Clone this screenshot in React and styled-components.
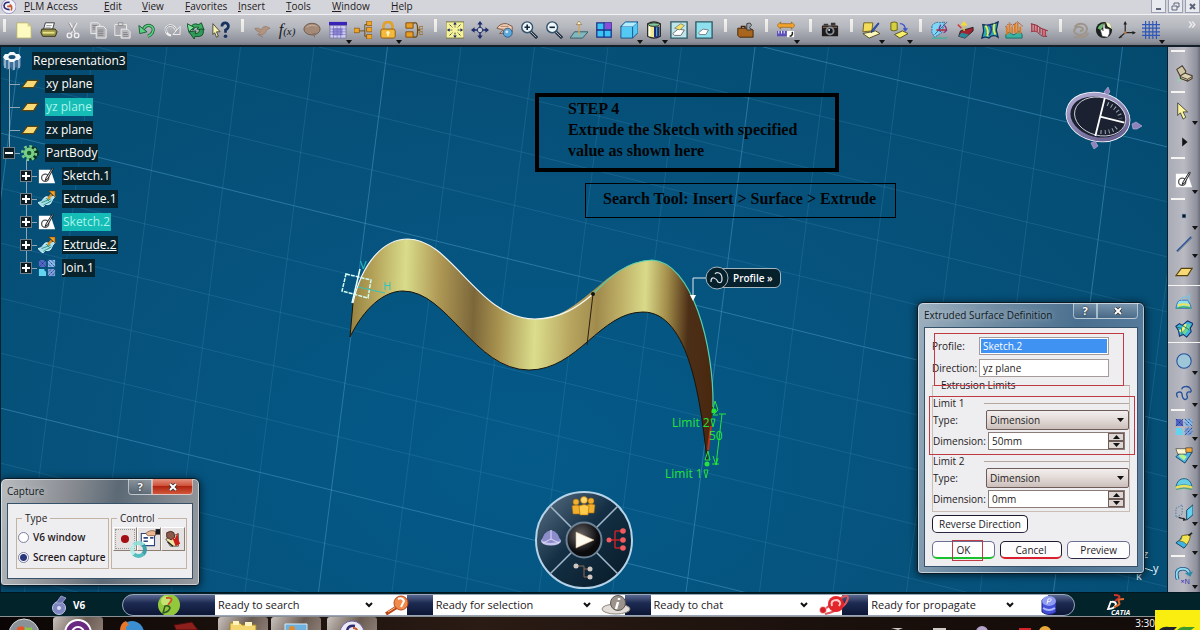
import React, { useState } from 'react';
import styled, { createGlobalStyle, css } from 'styled-components';

const GlobalStyle = createGlobalStyle`
    * {
        box-sizing: border-box;
    }
    body {
        margin: 0;
        background: #06527c;
        font-family: "Open Sans", "Noto Sans", sans-serif;
        font-size: 11px;
        overflow: hidden;
    }
    button, input, select {
        font: inherit;
        color: inherit;
        margin: 0;
        padding: 0;
    }
`

/* ---------- icons, all on a 20 x 20 grid ---------- */

const axisTip = <path d="M10 1l2 3H8zM10 19l2-3H8zM1 10l3-2v4zM19 10l-3-2v4z" fill="#1d2b6b" />

const patch = (
    <>
        <path d="M1 7l4-3 3 2 6-5 6 3-3 5 1 4-5 6-4-3-4 2-1-6z" fill="#3fb4e0" stroke="#14306c" strokeWidth="1.2" />
        <path d="M4 12Q9 9 10 5L13 4Q12 11 7 14z" fill="#f4f07a" />
        <path d="M8 14Q13 11 14 5L17 5Q15 12 11 16z" fill="#6fd885" />
        <path d="M2 8l5 1 1 8M8 6l8 5" stroke="#1c7c4a" fill="none" />
    </>
)

const sketchIcon = (
    <>
        <path d="M1 3h13l5 15H1z" fill="#fff" />
        <circle cx="8" cy="12" r="4" fill="none" stroke="#555" strokeWidth="1.4" />
        <path d="M16 1L9 12l-1 3 3-2 6-11z" fill="#ddd" stroke="#111" />
    </>
)

const extrudeIcon = (
    <>
        <path d="M0 14Q4 14 6 10Q8 6 12 8L19 7Q16 10 14 15Q12 17 8 16Q6 20 4 18z" fill="#9fe0ea" stroke="#e8f8ff" />
        <path d="M4 14l10-4M6 17l9-5M9 9l4 4" stroke="#2d8b7c" />
        <path d="M11 10l4-5" stroke="#e08a18" strokeWidth="2.400" />
        <path d="M12 1h7v7z" fill="#f6a021" stroke="#613600" strokeWidth=".6" />
    </>
)

const joinIcon = (
    <>
        <path d="M1 1h5l3 2v6H1z" fill="#5368c4" />
        <path d="M11 1h8v8h-8z" fill="#86b8e8" />
        <path d="M1 11h6q0 3 2 3v5H1z" fill="#63d3ef" />
        <path d="M11 11h8v8h-8z" fill="#7da0d8" />
        <path d="M1 1l8 8M9 1L1 9M11 1l8 8M15 1l4 4M11 5l4 4M19 11l-8 8M15 11l-4 4M19 15l-4 4" stroke="#1d2c70" strokeDasharray="1.500 1" />
    </>
)

const planeIcon = <path d="M7 6h12l-5 8H1z" fill="#f7d975" stroke="#57430f" strokeWidth="1.2" />

const icons = {
    newFile: <><path d="M2 2h12l4 4v13H2z" fill="#fdfbc0" stroke="#b2ac74" /><path d="M14 2v4h4z" fill="#d8d08a" /></>,
    print: <><path d="M6 2h10l-2 7H4z" fill="#fff" stroke="#333" /><path d="M7 5h6M6 7h6" stroke="#999" /><path d="M2 9h15l2 3-2 5H3l-2-4z" fill="#9a9548" stroke="#2b2a14" /><path d="M3 13h13" stroke="#e7e48a" strokeWidth="2" /></>,
    cut: <><path d="M6 2l6 11M14 2L8 13" stroke="#ecebea" strokeWidth="2.4" /><path d="M5 2l6 11M13 2L7 13" stroke="#85858b" /><circle cx="6" cy="16" r="2.5" fill="none" stroke="#eee" strokeWidth="1.6" /><circle cx="14" cy="16" r="2.5" fill="none" stroke="#eee" strokeWidth="1.6" /></>,
    copy: <><path d="M2 2h8l2 2v10H2z" fill="#b4b4b9" stroke="#f1f1f1" /><path d="M8 6h8l3 3v10H8z" fill="#b4b4b9" stroke="#f1f1f1" /><path d="M10 10h6M10 12h6M10 14h6M10 16h6M4 5h5M4 7h3M4 9h3" stroke="#808087" /></>,
    paste: <><path d="M2 4h13v12H2z" fill="#a9a9af" stroke="#f1f1f1" /><path d="M6 2h5v3H6z" fill="#ddd" stroke="#888" /><path d="M9 9h7l3 3v7H9z" fill="#b9b9be" stroke="#f1f1f1" /><path d="M11 13h5M11 15h6M11 17h6" stroke="#808087" /></>,
    undo: <><path d="M5 11Q8 4 13 5Q19 7 16 13Q14 16 11 17" fill="none" stroke="#15582c" strokeWidth="3.4" /><path d="M5 11Q8 4 13 5Q19 7 16 13Q14 16 11 17" fill="none" stroke="#5cd083" strokeWidth="1.8" /><path d="M1 5l1 9 8-2z" fill="#5cd083" stroke="#15582c" /></>,
    redo: <><path d="M15 11Q12 4 7 5Q1 7 4 13Q6 16 9 16" fill="none" stroke="#f0f0f0" strokeWidth="2.6" /><path d="M15 11Q12 4 7 5Q1 7 4 13" fill="none" stroke="#8d8d94" /><path d="M19 6v9h-8z" fill="#a7a7ad" stroke="#f0f0f0" /></>,
    update: <><path d="M3 9Q6 1 13 4L16 2l3 8-8-1 2-2Q8 6 7 10z" fill="#3fae63" stroke="#0f4d26" /><path d="M18 9Q20 19 9 17l-1 3-6-8 8-1-1 3Q14 14 14 9z" fill="#2f9b58" stroke="#0f4d26" /><path d="M0 3l8 4-6 5z" fill="#7fe09a" stroke="#0f4d26" /></>,
    help: <><path d="M1 3l8 9H5l2 5-2 1-2-5-2 2z" fill="#fbf4ad" stroke="#222" strokeWidth=".8" /><path d="M11 6Q11 2 15 2Q19 3 18 7Q17 9 15 10V13" fill="none" stroke="#17325f" strokeWidth="3" /><circle cx="15" cy="17" r="2" fill="#17325f" /></>,
    bird: <><path d="M2 8q5-1 7 2 2-5 6-4l4 2-4 2q-1 6-8 5l4 3-6-3 3-3q-5 0-6-4z" fill="#b2947f" stroke="#8b7263" strokeWidth=".6" /></>,
    comment: <><ellipse cx="10" cy="9" rx="9" ry="6.500" fill="#a58a78" stroke="#6b564a" /><path d="M10 14l3 5 1-6z" fill="#8b7263" /><path d="M4 7q5-4 11-1" stroke="#cbb7a7" fill="none" /></>,
    table: <><path d="M0 1h20v4H0z" fill="#3a22b8" /><path d="M1 5h18v14H1z" fill="#cfccf0" stroke="#7a78a8" /><path d="M4 8h11v8H4z" fill="#8f88d8" /><path d="M1 9h18M1 12h18M1 15h18M5 5v14M9 5v14M13 5v14" stroke="#6a66b0" strokeWidth=".6" /></>,
    relations: <><path d="M5 11h7M12 4v13M12 4h3M12 17h3" stroke="#6d470a" fill="none" /><path d="M0 8h6v5H0zM14 0h6v5h-6zM14 7h6v5h-6zM14 15h6v5h-6z" fill="#eda52a" stroke="#7a4a08" strokeWidth=".7" /></>,
    lock: <><path d="M5 9V5q1-4 5-4t5 4v4" fill="none" stroke="#e2a128" strokeWidth="3" /><rect x="2" y="9" width="16" height="10" rx="2" fill="#f3b93a" stroke="#8a560b" /><circle cx="10" cy="13" r="2" fill="#fff2c0" /><path d="M10 13v4" stroke="#fff2c0" strokeWidth="2" /></>,
    hierarchy: <><path d="M1 2h8v6H1zM1 12h8v6H1z" fill="#e99f26" stroke="#7a4a08" /><path d="M9 2h3q2 0 2 8 0 8-2 8H9M14 10h3" fill="none" stroke="#6d470a" strokeWidth="1.400" /><path d="M16 6h4v3h-4zM16 12h4v3h-4z" fill="none" stroke="#a4742b" /></>,
    fit: <><path d="M0 1h20v18H0z" fill="#f4f29a" stroke="#6d6c3a" /><path d="M10 3v4M10 13v4M3 10h4M13 10h4M4 4l3 3M16 4l-3 3M4 16l3-3M16 16l-3-3" stroke="#222" strokeDasharray="2 1" />{axisTip}</>,
    pan: <><path d="M10 2v16M2 10h16" stroke="#1d2b6b" strokeWidth="1.600" /><circle cx="10" cy="10" r="3" fill="#c9cad0" stroke="#1d2b6b" /><path d="M10 0l3 4H7zM10 20l3-4H7zM0 10l4-3v6zM20 10l-4-3v6z" fill="#1d2b6b" /></>,
    rotate: <><path d="M1 8q4-6 11-5l6 3v6l-6 1-8 1 4-4z" fill="#f4cfb8" stroke="#70503f" /><circle cx="13" cy="13" r="5" fill="#5fa8dc" stroke="#27557c" /><path d="M3 9h9M5 6h9" stroke="#a9806a" /><circle cx="12" cy="12" r="1.500" fill="#d3efff" /></>,
    zoomIn: <><path d="M12 12l7 7" stroke="#20303e" strokeWidth="3.400" /><path d="M12 12l6 6" stroke="#b7c4cf" /><circle cx="8" cy="7" r="6" fill="#eef7fc" stroke="#35536b" strokeWidth="1.600" /><path d="M8 4v6M5 7h6" stroke="#10253a" strokeWidth="1.800" /></>,
    zoomOut: <><path d="M12 12l7 7" stroke="#20303e" strokeWidth="3.400" /><path d="M12 12l6 6" stroke="#b7c4cf" /><circle cx="8" cy="7" r="6" fill="#eef7fc" stroke="#35536b" strokeWidth="1.600" /><path d="M5 7h6" stroke="#10253a" strokeWidth="1.800" /></>,
    normal: <><path d="M5 12h15l-6 7H0z" fill="#82b7bd" stroke="#2f5a66" /><path d="M10 15V2" stroke="#d8a35a" strokeWidth="1.500" /><path d="M10 0l3 4H7z" fill="#fff3c8" stroke="#7a5a2a" strokeWidth=".6" /></>,
    multi: <><path d="M2 2h16v16H2z" fill="#38c4f4" stroke="#1c2c88" strokeWidth="1.400" /><path d="M11 2h7v7h-7z" fill="#8f49d9" /><path d="M10 2v16M2 10h16" stroke="#1c2c88" strokeWidth="1.400" /></>,
    cube: <><path d="M1 6l5-5h14v12l-6 6H1z" fill="#54c9f3" stroke="#1b4c86" /><path d="M1 6h13l6-5M14 6v13" fill="none" stroke="#1b4c86" /><path d="M2 6l4-4h13l-5 4z" fill="#b5edff" /></>,
    cylinder: <><path d="M3 3q7-4 14 0v14q-7 4-14 0z" fill="#efe98b" stroke="#222" strokeWidth="1.400" /><path d="M10 6h6v11q-3 2-6 1z" fill="#1a2a7c" /><path d="M5 6v11" stroke="#fff" strokeWidth="2" /><path d="M13 7v10" stroke="#5bd0c8" /><ellipse cx="10" cy="4" rx="6" ry="2" fill="#7fc9a0" stroke="#222" /></>,
    hide: <><path d="M1 1h18v18H1z" fill="#bfe6ea" stroke="#2f5a66" strokeWidth="1.500" /><path d="M3 14l6-5 7 1-4 6H5z" fill="#fff" stroke="#666" /><path d="M5 8l7-5 4 2-5 5z" fill="#f0e06c" stroke="#555" strokeWidth=".6" /></>,
    swap: <><path d="M1 1h18v18H1z" fill="#8fe0ee" stroke="#2f5a66" strokeWidth="1.500" /><path d="M4 13l5-4 6 1-3 5H5z" fill="#fff" stroke="#777" /></>,
    toolbox: <><path d="M2 8h13l4 2v8H4l-2-2z" fill="#a8651d" stroke="#3d2208" /><path d="M12 3q5-2 5 2l-2 2 2 3h-5z" fill="#9fa3ac" stroke="#333" /><path d="M6 8V6h4v2" fill="none" stroke="#3d2208" strokeWidth="1.500" /></>,
    measure: <><path d="M0 5l4-4v2h12V1l4 4-4 4V7H4v2z" fill="#f2a32b" stroke="#8a560b" strokeWidth=".7" /><path d="M0 11h12v6H0z" fill="#5a50b8" /><path d="M2 11v3M5 11v3M8 11v3" stroke="#fff" /><path d="M11 11h8v7h-8z" fill="#fff" /><path d="M14 17q4-1 3-5" stroke="#222" fill="none" strokeWidth="1.600" /></>,
    camera: <><rect x="1" y="5" width="18" height="12" rx="1" fill="#201c1c" /><path d="M3 3h5v2H3zM11 2h5v3h-5z" fill="#3c3430" /><path d="M2 7h16" stroke="#a57a58" /><circle cx="10" cy="11" r="5" fill="#8a8f96" /><circle cx="10" cy="11" r="3" fill="#11151d" /><circle cx="9" cy="10" r="1" fill="#fff" /></>,
    paint: <><path d="M2 2h10l-1 9-10 1z" fill="#f2dc5c" stroke="#6d5e17" /><path d="M1 14l14-3 5 3-12 5z" fill="#fbf7ba" stroke="#4e4720" /><path d="M19 3l-7 9-2 1 1-3 7-8z" fill="#2d55c4" stroke="#13245c" strokeWidth=".6" /></>,
    catalog: <><path d="M1 2q4-2 7 0v8q-4 2-7 0z" fill="#d3cf3e" stroke="#5f5c12" /><path d="M11 3q6 0 6 7" stroke="#3d51c9" strokeWidth="1.400" fill="none" /><path d="M14 8h6l-3 4z" fill="#3d51c9" /><path d="M5 15l9-4 6 3-9 5z" fill="#f7ef69" stroke="#4e4720" /></>,
    distance: <><path d="M1 5q5-5 9-3l5-1-3 12-8 5-3-5z" fill="#7fd6f4" stroke="#2b5f98" strokeDasharray="2 1" /><path d="M4 15L18 1" stroke="#2b5f98" /><path d="M6 10h12" stroke="#b93232" strokeWidth="1.800" /><path d="M11 4q-4 6 0 8M15 5q5 5-1 8" stroke="#7a2f8c" fill="none" strokeWidth="1.400" /><path d="M1 19h17" stroke="#41b3a3" strokeWidth="1.500" /></>,
    draft: <><path d="M5 11l14-4v4l-9 8-7-2z" fill="#a12434" stroke="#222" /><path d="M3 17l7 2 4-4-8-2z" fill="#2b8a9a" /><path d="M9 11V2" stroke="#e3c22e" strokeWidth="1.600" /><path d="M9 0l4 5H5z" fill="#f3dc3a" /><path d="M2 4l4 4" stroke="#d23030" strokeWidth="1.500" /></>,
    mapping: <><path d="M2 4q7 2 17-3l-2 9 2 8q-4-3-8-1l-2 2q-4-2-8 0l2-8z" fill="#2ea7b0" stroke="#0f3158" strokeWidth="1.400" /><path d="M5 5q4 6 2 12M15 3q-2 7 1 12" stroke="#f3e84a" strokeWidth="2" fill="none" /><path d="M8 4q5 2 3 8l-2 4" stroke="#273d9c" strokeWidth="2" fill="none" /></>,
    curvature: <><path d="M1 15q3-4 6-1t6-1 6 2v4H1z" fill="#3bb1a0" stroke="#186a66" /><path d="M2 15V6M5 14V3M8 14V6M11 13V3M14 14V2M17 14V6" stroke="#e07a1e" strokeWidth="2" /><path d="M0 7l5-5 3 3 6-4 6 5" stroke="#a8421a" fill="none" strokeDasharray="2 1" /></>,
    porcupine: <><path d="M1 12q6-2 9 2t9 3" fill="none" stroke="#7a2a34" /><path d="M2 12V3M5 12V4M8 12V5M11 14V7M14 16V9M17 17v-7" stroke="#c23b48" strokeWidth="1.700" /><path d="M1 3l7 2 4 3 8 3" fill="none" stroke="#8c2731" /></>,
    swirl: <path d="M16 13Q13 17 7 15Q1 12 5 8Q9 5 13 8Q14 11 10 11M4 7Q8 1 15 4Q20 8 16 13M3 18h10q5-1 6-5" fill="none" stroke="#9f948a" strokeWidth="2.200" />,
    hand: <><circle cx="10" cy="10" r="9" fill="#1c201e" /><path d="M3 8q3-6 9-5l-6 7z" fill="#6bbb72" /><path d="M8 17L6 10l2-1 1 2V4h2v4l5 1v5l-2 4z" fill="#fff" stroke="#444" strokeWidth=".6" /><path d="M12 1q6 1 7 8l-5-3z" fill="#eef4bd" /></>,
    axis: <><path d="M8 13V2M8 13h10M8 13l-7 6" stroke="#222" strokeWidth="1.300" /><path d="M8 0l2 4H6zM20 13l-4 2v-4z" fill="#222" /><path d="M1 19l4-1-2-2z" fill="#222" /><circle cx="8" cy="13" r="1.500" fill="#b97a4a" /></>,
    grid: <><path d="M4 0v20M8 0v20M12 0v20M16 0v20M0 4h20M0 8h20M0 12h20M0 16h20" stroke="#2f57b8" strokeWidth="1.300" /></>,
    chair: <><path d="M2 20l5-9 5 4z" fill="#8fd6a8" /><path d="M2 6l6-4 4 6-1 4-5 2z" fill="#cdc6a4" stroke="#4a3a2c" strokeWidth="1.200" /><path d="M6 13l5-3 8 3v3l-5 3-8-3z" fill="#d8d2b2" stroke="#4a3a2c" strokeWidth="1.200" /><path d="M6 14l8 3 5-3M14 17v2" stroke="#4a3a2c" fill="none" /></>,
    cursor: <path d="M3 1l11 10H9l3 6-3 2-3-7-3 3z" fill="#fbf49a" stroke="#333" strokeWidth=".9" />,
    play: <path d="M8 5l6 5-6 5z" fill="#141414" />,
    sketch: sketchIcon,
    point: <rect x="8" y="8" width="4" height="4" fill="#111" stroke="#3b77b0" strokeWidth=".6" />,
    line: <><path d="M2 18L18 2" stroke="#23519c" strokeWidth="1.600" /><path d="M3 19L19 3" stroke="#444" strokeWidth=".5" /></>,
    plane: planeIcon,
    offset: <><path d="M2 13q1-5 5-5h7l3 5 1 4H1z" fill="#8fe0ee" stroke="#2f6ab4" /><path d="M3 14q7-3 13 0" stroke="#e8e455" strokeWidth="2.400" fill="none" /><path d="M2 17q8-3 16 0" stroke="#3ea868" strokeWidth="1.500" fill="none" /><path d="M7 8l1-3 8-1V1M16 4v6" stroke="#7fc0da" fill="none" strokeWidth="1.400" /></>,
    patch: patch,
    circle: <circle cx="10" cy="10" r="8" fill="#9fc6d8" stroke="#23519c" strokeWidth="1.200" />,
    spline: <path d="M3 15q-3-5 1-6t4 4q1 5 4 4t1-5q0-4 4-3 2-1 0-4t-6-2-3 3" fill="none" stroke="#23519c" strokeWidth="1.500" />,
    join: joinIcon,
    split: <><path d="M1 12l7-7 11 2-8 12z" fill="#4cb7ea" stroke="#123a5c" /><path d="M4 11l6 5 3-4-6-4z" fill="#b7f08f" /><path d="M1 3h12v6H3z" fill="#fbf6cf" stroke="#333" strokeWidth=".7" /><path d="M12 2h7v5h-7z" fill="#f3a93a" stroke="#333" strokeWidth=".7" /></>,
    dome: <><path d="M1 13q2-9 9-9t9 9q-9-4-18 0z" fill="#66cfe6" stroke="#1f5a7c" /><path d="M1 14q9-4 18 0" stroke="#e8e455" strokeWidth="2.400" fill="none" /><path d="M1 16q9-3 18 0" stroke="#37a063" fill="none" /></>,
    symmetry: <><path d="M1 6l7-4v10l-7 4z" fill="none" stroke="#3578a8" strokeDasharray="1.500 1.500" /><path d="M13 8l7-6v11l-7 6z" fill="#63d3ef" stroke="#123a5c" /><path d="M4 16l7 2" stroke="#222" strokeWidth="1.300" /><path d="M13 19l-4-3 0 4z" fill="#222" /></>,
    extrapolate: <><path d="M1 12Q7 9 8 4L17 3Q16 12 10 18z" fill="#3fb4e0" stroke="#123a5c" /><path d="M8 4l9-1q0 6-4 11-3-4-8-4 3-2 3-6z" fill="#f3e552" stroke="#7a5b10" strokeWidth=".7" /><path d="M15 4l4-3" stroke="#222" strokeWidth="2" /></>,
    repeat: <><path d="M3 15Q-1 3 9 3q6 0 7 6" fill="none" stroke="#1d4f86" strokeWidth="4" /><path d="M3 15Q-1 3 9 3q6 0 7 6" fill="none" stroke="#8fdcf0" strokeWidth="2.200" /><path d="M11 8l9-2-3 6z" fill="#2d8aa8" /><text x="6" y="20" fontSize="8" fill="#2a22b8">×N</text></>,
}

const Glyph = styled.svg.attrs({ viewBox: '0 0 20 20', 'aria-hidden': true })`
    display: block;
    flex: none;
    width: ${props => props.$size || 18}px;
    height: ${props => props.$size || 18}px;
`

/* ---------- shell ---------- */

const Page = styled.div`
    display: flex;
    flex-direction: column;
    height: 100vh;
    color: #241a1c;
`

const MenuBar = styled.nav`
    display: flex;
    justify-content: space-between;
    flex: none;
    height: 14px;
    background: #d4d5da;
    overflow: hidden;
`

const MenuList = styled.div`
    display: grid;
    grid-template-columns: 24px 80px 38px 43px 53px 48px 46px 59px auto;
    align-items: start;
`

const MenuItem = styled.button`
    border: 0;
    background: none;
    text-align: left;
    font-size: 10px;
    line-height: 13px;
    white-space: nowrap;

    &::first-letter {
        text-decoration: underline;
    }
`

const WindowButtons = styled.div`
    display: flex;
    gap: 2px;
`

const WindowButton = styled.button`
    width: 15px;
    height: 13px;
    display: grid;
    place-items: center;
    border: 1px solid #9a9fb4;
    border-top: 0;
    background: #e9eaf0;
    color: #5d6478;
`

const ToolBar = styled.div`
    display: flex;
    align-items: stretch;
    flex: none;
    height: 33px;
    padding-left: 2px;
    border-top: 1px solid #f2f2f5;
    border-bottom: 2px solid #13202b;
    background: linear-gradient(#c6c7cc, #b6b8bf 40%, #8d909a 90%, #73777f);
`

// the side padding is not part of what grows
const ToolGroup = styled.div`
    flex: ${props => props.$grow - 21} 1 0;
    display: flex;
    align-items: center;
    justify-content: space-between;
    padding: 0 9px 0 12px;
    background: linear-gradient(#f4f3f0, #e3e2df) 1px 4px / 3px 13px no-repeat;
`

const SideBar = styled.div`
    flex: none;
    width: 32px;
    display: flex;
    flex-direction: column;
    padding-top: 3px;
    background: linear-gradient(to right, #a9abb5, #b9bac2 50%, #8e909c 90%, #6b6e7a);
`

const SideGroup = styled.div`
    flex: ${props => props.$grow - 4} 1 0;
    display: flex;
    flex-direction: column;
    align-items: center;
    justify-content: space-around;
    min-height: 0;
    padding-top: 4px;
    background: linear-gradient(#f6f5f2, #f6f5f2) ${props => props.$full ? '0 0 / 32px 1px' : '3px 0 / 14px 2px'} no-repeat;
`

const ToolButton = styled.button`
    position: relative;
    display: grid;
    place-items: center;
    width: 20px;
    height: 20px;
    border: 0;
    background: none;

    ${props => props.$menu && css`
        &::after {
            content: "";
            position: absolute;
            right: -4px;
            bottom: -4px;
            border: 3px solid transparent;
            border-top: 4px solid #111;
            border-bottom: 0;
        }
    `}
`

const Formula = styled.span`
    font: italic 16px "Liberation Serif", serif;
    color: #15191f;
    white-space: nowrap;

    small {
        font-size: 11px;
    }
`

const MoreTools = styled.button`
    width: 30px;
    align-self: flex-start;
    border: 0;
    background: none;
    color: #f4f4f4;
    font-size: 16px;
    line-height: 16px;
    text-align: right;
    padding-right: 4px;
`

const Workspace = styled.main`
    flex: 1;
    min-height: 0;
    display: flex;
`

const Viewport = styled.section`
    position: relative;
    flex: 1;
    min-width: 0;
    overflow: hidden;
    border-left: 1px solid #03202f;
    border-right: 1px solid #03202f;
    background: radial-gradient(ellipse at 45% 75%, #045a89 0%, #06527c 50%, #044a6e 100%);
`

const Scene = styled.svg`
    position: absolute;
    inset: 0;
    width: 100%;
    height: 100%;
`

/* ---------- specification tree ---------- */

const Tree = styled.ul`
    position: relative;
    display: inline-block;
    margin: 0;
    padding: 2px 0 0;
    list-style: none;
    color: #fff;
    font-size: 12px;
`

const Branch = styled.ul`
    position: relative;
    margin: 0;
    padding: 0 0 0 ${props => props.$indent}px;
    list-style: none;

    &::before {
        content: "";
        position: absolute;
        left: ${props => props.$indent + 6}px;
        top: -4px;
        bottom: ${props => props.$tail}px;
        border-left: 1px solid #8fa6b5;
    }
`

const TreeRow = styled.div`
    display: flex;
    align-items: center;
    height: 23px;
    padding-left: ${props => props.$root ? 1 : 0}px;
    gap: ${props => props.$root ? 10 : 6}px;
`

const Joint = styled.span`
    position: relative;
    width: 12px;
    height: 12px;
    flex: none;

    &::after {
        content: "";
        position: absolute;
        left: 6px;
        top: 6px;
        width: 11px;
        border-top: 1px solid #8fa6b5;
    }
`

const Expander = styled.button`
    position: relative;
    z-index: 1;
    display: grid;
    place-items: center;
    width: 12px;
    height: 12px;
    border: 1px solid #6f7f8a;
    background: #0c1a22;
    color: #fff;

    svg {
        width: 8px;
        height: 8px;
        stroke: currentColor;
        stroke-width: 2;
    }
`

const TreeLabel = styled.span`
    padding: 0 1px;
    line-height: 18px;
    background: ${props => props.$active ? '#15bdb6' : '#08222c'};
    color: ${props => props.$active ? '#a9f4ea' : '#fff'};
    text-decoration: ${props => props.$current ? 'underline' : 'none'};
`

/* ---------- notes pinned on the scene ---------- */

const Note = styled.div`
    position: absolute;
    left: ${props => props.$left}px;
    top: ${props => props.$top}px;
    width: ${props => props.$width}px;
    font-family: "Liberation Serif", serif;
    font-weight: bold;
    font-size: 16px;
    color: #020406;
    border: ${props => props.$thick ? 4 : 1}px solid #000;
    padding: ${props => props.$thick ? '1px 29px 7px' : '4px 17px 8px'};

    p {
        margin: 0;
        line-height: 21px;
        white-space: nowrap;
    }
`

const ProfileTag = styled.button`
    position: absolute;
    left: 704px;
    top: 219px;
    display: flex;
    align-items: center;
    gap: 4px;
    height: 24px;
    border: 0;
    background: none;
    color: #fff;
    font-size: 10px;
    font-weight: 600;

    svg {
        position: relative;
        width: 24px;
        height: 24px;
    }
    &::before {
        content: "";
        position: absolute;
        inset: 2px 0 2px 12px;
        border: 1px solid #a4b6c0;
        border-radius: 6px;
        background: #06202c;
    }
    span {
        position: relative;
        padding-right: 8px;
    }
`

const Wheel = styled.button`
    position: absolute;
    left: 533px;
    top: 443px;
    width: 99px;
    height: 99px;
    border: 0;
    border-radius: 50%;
    background: none;
`

/* ---------- dialogs ---------- */

const Window = styled.div`
    position: absolute;
    left: ${props => props.$left}px;
    top: ${props => props.$top}px;
    width: ${props => props.$width}px;
    padding: 0 6px 6px;
    border: 1px solid #0c1a24;
    border-radius: 6px 6px 4px 4px;
    background: ${props => props.$glass};
    box-shadow: inset 0 0 0 1px rgba(230, 240, 248, .65), 0 1px 8px rgba(0, 0, 0, .7);
    font-size: 10px;
`

const TitleBar = styled.header`
    display: flex;
    justify-content: space-between;
    height: 24px;

    h2 {
        margin: 0;
        font-size: 10px;
        line-height: 24px;
        font-weight: normal;
        color: #101a22;
        white-space: nowrap;
        text-shadow: 0 0 6px rgba(255, 255, 255, .6);
    }
`

const Caption = styled.div`
    display: flex;
`

const CaptionButton = styled.button`
    width: ${props => props.$wide ? 41 : 24}px;
    height: 16px;
    border: 1px solid rgba(225, 235, 242, .6);
    border-top: 0;
    border-radius: ${props => props.$wide ? '0 0 4px 0' : '0 0 0 4px'};
    background: ${props => props.$danger
        ? 'linear-gradient(#e3927f, #cf5138 45%, #b02511 50%, #d2583a)'
        : 'linear-gradient(rgba(255, 255, 255, .25), rgba(40, 60, 80, .2))'};
    color: #fff;
    font-size: 11px;
    font-weight: bold;
    line-height: 14px;
    text-shadow: 0 0 2px #000;

    svg {
        display: block;
        margin: 0 auto;
        width: 10px;
        height: 8px;
    }
`

const Panel = styled.form`
    position: relative;
    border: 1px solid #36526b;
    background: #eeedf0;
    padding: ${props => props.$pad};
`

const Field = styled.div`
    display: grid;
    grid-template-columns: ${props => props.$label}px minmax(0, 1fr);
    align-items: center;
    height: ${props => props.$tall ? 22 : 21}px;
    margin-right: ${props => props.$inset || 0}px;
    white-space: nowrap;
`

const TextBox = styled.input`
    width: 100%;
    height: 18px;
    padding: 0 3px;
    border: 1px solid #a59c9a;
    border-radius: 0;
    background: ${props => props.$picked ? '#3f92f2' : '#fff'};
    box-shadow: inset 0 0 0 1px #fff;
    color: ${props => props.$picked ? '#fff' : '#2a1d1c'};
    outline: none;
`

const Limits = styled.fieldset`
    min-width: 0;
    margin: 0 0 3px;
    padding: 2px 0 2px;
    border: 1px solid #c9bdb6;
    border-top-color: #b6a79f;

    legend {
        margin-left: 6px;
        padding: 0 2px;
        line-height: 12px;
    }
`

const LimitTitle = styled.h3`
    display: flex;
    align-items: center;
    gap: 20px;
    margin: 0;
    padding-top: 4px;
    font-size: 10px;
    font-weight: normal;
    line-height: 12px;

    &::after {
        content: "";
        flex: 1;
        border-top: 1px solid #b6a79f;
    }
`

const Picker = styled.span`
    display: grid;
    align-items: center;
    min-width: 0;

    select, svg {
        grid-area: 1 / 1;
    }
    svg {
        justify-self: end;
        margin-right: 5px;
        width: 7px;
        height: 4px;
        pointer-events: none;
    }
    select {
        appearance: none;
        width: 100%;
        height: 20px;
        padding: 0 3px;
        border: 1px solid #6e5c58;
        border-radius: 2px;
        background: linear-gradient(#f3efee, #e4dcd9 45%, #cbbfbb);
    }
`

const Spinner = styled.span`
    display: flex;
    height: 18px;
    margin: 0 4px 0 2px;
    border: 1px solid #8c7b76;
    background: #fff;

    input {
        flex: 1;
        min-width: 0;
        padding: 0 3px;
        border: 0;
        background: none;
        outline: none;
    }
`

const Steps = styled.span`
    display: flex;
    flex-direction: column;
    width: 16px;

    button {
        flex: 1;
        display: grid;
        place-items: center;
        border: 1px solid #6e5c58;
        background: #ded6d2;
    }
    svg {
        width: 7px;
        height: 4px;
    }
`

const PushButton = styled.button`
    height: 18px;
    padding: 0 6px;
    border: 1px solid ${props => props.$soft ? '#6c6f94' : '#1c1a2e'};
    border-bottom: ${props => props.$mark ? `2px solid ${props.$mark}` : '1px solid #2a2840'};
    border-radius: 5px;
    background: #fdfdfe;
    line-height: 14px;
    white-space: nowrap;
`

const Actions = styled.div`
    display: grid;
    grid-template-columns: repeat(3, 1fr);
    gap: 5px;
    margin-top: 8px;
`

const Marker = styled.span`
    position: absolute;
    left: ${props => props.$left}px;
    top: ${props => props.$top}px;
    width: ${props => props.$width}px;
    height: ${props => props.$height}px;
    border: 1px solid #c03a44;
    pointer-events: none;
`

const CaptureGroups = styled.div`
    display: grid;
    grid-template-columns: 93px 76px;
    gap: 2px;
`

const CaptureSet = styled.fieldset`
    min-width: 0;
    height: 57px;
    margin: 0;
    padding: 3px 0 0 1px;
    border: 1px solid #c2b3a4;

    legend {
        margin-left: 4px;
        padding: 0 3px;
        line-height: 12px;
    }
`

const RadioLabel = styled.label`
    display: flex;
    align-items: center;
    gap: 4px;
    height: 20px;
    font-size: 10px;
    font-weight: 600;
    white-space: nowrap;

    input {
        appearance: none;
        flex: none;
        width: 11px;
        height: 11px;
        border: 1px solid #7b80a0;
        border-radius: 50%;
        background: #fff;
    }
    input:checked {
        background: radial-gradient(#26357c 0 3px, #fff 4px);
    }
`

const RecordButtons = styled.div`
    display: flex;
`

const RecordButton = styled.button`
    display: grid;
    place-items: center;
    width: 24px;
    height: 24px;
    border: 1px solid;
    border-color: #fff #8d7d72 #8d7d72 #fff;
    background: #e6e2e1;
    outline: ${props => props.$focus ? '1px dotted #999' : 'none'};
    outline-offset: -3px;
`

/* ---------- bottom bars ---------- */

const StatusBar = styled.footer`
    flex: none;
    display: grid;
    grid-template-columns: 122px minmax(0, 1fr) 125px;
    align-items: center;
    height: 25px;
    border-top: 1px solid #021820;
    border-bottom: 1px solid #8b9094;
    background: #03232b;
`

const Version = styled.div`
    display: flex;
    align-items: center;
    gap: 3px;
    padding-left: 50px;
    color: #fff;
    font-size: 10px;
    font-weight: bold;
`

const Pill = styled.div`
    display: flex;
    height: 22px;
    border: 1px solid #9aa6b8;
    border-radius: 11px;
    background: linear-gradient(#5a6a92, #1d2a52 40%, #0c1634);
    overflow: hidden;
`

const PillHead = styled.div`
    flex: none;
    width: 92px;
    display: grid;
    place-items: center;
`

const Segment = styled.div`
    flex: ${props => props.$grow} 1 0;
    min-width: 0;
    display: flex;
`

const SegmentEnd = styled.span`
    flex: none;
    width: 50px;
    background: linear-gradient(to right, #fff 24px, transparent 24px);

    svg {
        display: block;
        width: 32px;
        height: 20px;
    }
`

const StatusPicker = styled(Picker)`
    flex: 1;
    font-size: 11px;

    svg {
        width: 8px;
        height: 6px;
        margin-right: 10px;
    }
    select {
        border: 0;
        border-radius: 0;
        background: #fff;
    }
`

const Brand = styled.svg`
    margin-left: 30px;
    width: 32px;
    height: 22px;
`

const TaskBar = styled.div`
    position: relative;
    flex: none;
    height: 13px;
    display: flex;
    align-items: flex-start;
    justify-content: space-between;
    background: linear-gradient(to right, #0b0605, #2a1b14 40%, #1a100c 70%, #120b09);
`

const TaskSet = styled.div`
    display: flex;
    height: 13px;
    overflow: hidden;
`

const Task = styled.button`
    width: ${props => props.$width}px;
    height: 13px;
    overflow: hidden;
    margin-right: ${props => props.$gap || 0}px;
    border: 0;
    border-radius: 3px 3px 0 0;
    background: ${props => props.$open ? 'linear-gradient(120deg, #c9c2bd, #6a5b52 60%, #8a7c74)' : 'none'};
    display: flex;
    justify-content: center;

    svg {
        flex: none;
        width: 32px;
        height: 13px;
    }
`

const Tray = styled.div`
    display: flex;
    height: 13px;
    padding-right: 45px;
    color: #fff;

    svg {
        width: 246px;
        height: 13px;
    }
    time {
        font-size: 10px;
        line-height: 13px;
    }
`

const Badge = styled.svg`
    position: absolute;
    right: 0;
    bottom: 0;
    width: 45px;
    height: 20px;
`

// grow follows the share of the bar that a group takes
const topGroups = [
    { grow: 238, tools: ['newFile', 'print', 'cut', 'copy', 'paste', 'undo', 'redo', 'update', 'help'] },
    { grow: 193, tools: ['bird', 'formula', 'comment', 'table*', 'relations', 'lock*', 'hierarchy'] },
    { grow: 291, tools: ['fit', 'pan', 'rotate', 'zoomIn', 'zoomOut', 'normal', 'multi', 'cube*', 'cylinder*', 'hide', 'swap'] },
    { grow: 40, tools: ['toolbox'] },
    { grow: 44, tools: ['measure*'] },
    { grow: 41, tools: ['camera'] },
    { grow: 69, tools: ['paint*', 'catalog*'] },
    { grow: 140, tools: ['distance', 'draft', 'mapping', 'curvature', 'porcupine'] },
    { grow: 112, tools: ['swirl', 'hand', 'axis', 'grid*'] },
]

const sideGroups = [
    { grow: 41, tools: ['chair'] },
    { grow: 66, tools: ['cursor*', 'play'] },
    { grow: 41, tools: ['sketch*'] },
    { grow: 87, tools: ['point*', 'line*', 'plane'] },
    { grow: 56, tools: ['offset', 'patch'], full: true },
    { grow: 67, tools: ['circle*', 'spline*'], full: true },
    { grow: 146, tools: ['join*', 'split*', 'dome*', 'symmetry*', 'extrapolate*'] },
    { grow: 37, tools: ['repeat*'] },
]

const menus = ['PLM Access', 'Edit', 'View', 'Favorites', 'Insert', 'Tools', 'Window', 'Help']

const features = [
    { name: 'Sketch.1', icon: sketchIcon },
    { name: 'Extrude.1', icon: extrudeIcon },
    { name: 'Sketch.2', icon: sketchIcon, active: true },
    { name: 'Extrude.2', icon: extrudeIcon, current: true },
    { name: 'Join.1', icon: joinIcon },
]

const DownArrow = () => <svg viewBox="0 0 7 4" aria-hidden="true"><path d="M0 0h7L3.500 4z" fill="#111" /></svg>
const UpArrow = () => <svg viewBox="0 0 7 4" aria-hidden="true"><path d="M0 4h7L3.500 0z" fill="#111" /></svg>
const Chevron = () => <svg viewBox="0 0 8 6" aria-hidden="true"><path d="M1 1l3 3 3-3" fill="none" stroke="#111" strokeWidth="2" /></svg>
const Cross = () => (
    <svg viewBox="0 0 10 8" aria-hidden="true">
        <path d="M2 1l6 6M8 1L2 7" stroke="#333" strokeWidth="3.500" />
        <path d="M2 1l6 6M8 1L2 7" stroke="#fff" strokeWidth="2" />
    </svg>
)

const Tool = ({ id }) => {
    const name = id.replace('*', '')
    return (
        <ToolButton type="button" title={name} $menu={id.endsWith('*')}>
            {name === 'formula' ? <Formula>f<small>(x)</small></Formula> : <Glyph>{icons[name]}</Glyph>}
        </ToolButton>
    )
}

// two families of parallel lines, every fifth one is a major line
const GridLines = () => {
    const steep = [...Array(18)].map((_, k) => ({ x: 20 + 73.5 * k, major: k % 5 === 0 }))
    const flat = [...Array(19)].map((_, k) => ({ y: -362 + 55 * k, major: k % 5 === 4 }))
    return (
        <g stroke="#3d8cb8">
            {steep.map(l => <path key={l.x} d={`M${l.x} 47l-69 545`} opacity={l.major ? 0.65 : 0.28} />)}
            {flat.map(l => <path key={l.y} d={`M0 ${l.y}l1200 297`} opacity={l.major ? 0.65 : 0.28} />)}
        </g>
    )
}

const topEdge = 'C362 262 384 239 408 239C452 239 478 319 535 319C583 319 605 261 652 260C692 262 714 345 713 407'

const ModelScene = () => (
    <Scene viewBox="1 47 1166 545" preserveAspectRatio="xMinYMin slice" aria-hidden="true">
        <defs>
            <linearGradient id="gold" gradientUnits="userSpaceOnUse" x1="350" y1="300" x2="714" y2="312">
                <stop offset="0" stopColor="#94803f" />
                <stop offset=".06" stopColor="#b3a158" />
                <stop offset=".15" stopColor="#d9dc8b" />
                <stop offset=".24" stopColor="#b09a56" />
                <stop offset=".34" stopColor="#7c673a" />
                <stop offset=".41" stopColor="#a8924f" />
                <stop offset=".51" stopColor="#dbde8d" />
                <stop offset=".61" stopColor="#b7a45e" />
                <stop offset=".68" stopColor="#a08b4d" />
                <stop offset=".74" stopColor="#bdae65" />
                <stop offset=".81" stopColor="#d9da8a" />
                <stop offset=".87" stopColor="#a38d4a" />
                <stop offset=".93" stopColor="#4c2f17" />
                <stop offset="1" stopColor="#4a2810" />
            </linearGradient>
            <linearGradient id="rim" x2="1" y2="1">
                <stop offset="0" stopColor="#b9b3da" />
                <stop offset="1" stopColor="#5d5687" />
            </linearGradient>
        </defs>
        <GridLines />
        <path d={`M353 303${topEdge}L707 462C701 405 690 312 643 312C600 312 578 370 529 370C474 370 448 291 403 291C384 291 364 308 350 337z`} fill="url(#gold)" />
        <path d="M353 303L350 337C364 308 384 291 403 291C448 291 474 370 529 370C578 370 600 312 643 312C690 312 701 405 707 460" fill="none" stroke="#1a140a" />
        <path d="M353 303C362 262 384 239 408 239C452 239 478 319 535 319C560 319 578 307 593 294" fill="none" stroke="#f2f6f5" strokeWidth="1.200" />
        <path d="M593 294C609 278 626 261 652 260C692 262 714 345 713 407" fill="none" stroke="#56cfae" strokeWidth="1.200" />
        <path d="M593 294l-6 51" stroke="#2a2010" />
        <circle cx="593" cy="294" r="2" fill="#111" />

        <path d="M346 274l25 6-3 18-26-7z" fill="none" stroke="#d3fbf2" strokeWidth="1.500" strokeDasharray="4 1" />
        <path d="M352 303l8-34" stroke="#e8fffb" strokeWidth="1.500" />
        <path d="M358 287l27 6" stroke="#35c3c0" />
        <g fill="#2fc4c4" fontSize="11">
            <text x="360" y="269">V</text>
            <text x="383" y="290">H</text>
        </g>

        <path d="M706 278h-13v18" fill="none" stroke="#dfe8ee" />
        <path d="M690 295h6l-3 6z" fill="#fff" />

        <path d="M711 426l-3 24" stroke="#c0311c" strokeWidth="2" />
        <g fill="none" stroke="#27e23a">
            <path d="M712 413l3-12 3 9-5 5 5 0M719 414h7M722 414l-6 51M712 464h7M705 460l3-9 2 9zM713 456l3 9 2-7" />
        </g>
        <circle cx="714" cy="411" r="2.500" fill="#27e23a" />
        <circle cx="707" cy="464" r="2.500" fill="#27e23a" />
        <g fill="#27e23a" fontSize="12">
            <text x="672" y="427">Limit 2</text>
            <text x="665" y="478">Limit 1</text>
            <text x="709" y="440" fontSize="12">50</text>
            <path d="M713 427l-2-8h4zM706 478l-2-8h4z" fill="none" stroke="#27e23a" />
        </g>

        <g transform="rotate(14 1098 117)">
            <ellipse cx="1098" cy="117" rx="32" ry="24" fill="#15202c" stroke="#fff" strokeWidth="1.500" />
            <ellipse cx="1098" cy="117" rx="30" ry="22" fill="#1b2130" stroke="url(#rim)" strokeWidth="4" />
            <ellipse cx="1100" cy="116" rx="26" ry="19" fill="none" stroke="#e7e7ef" strokeWidth=".8" />
            <path d="M1100 97v39M1100 116h25" stroke="#fff" strokeWidth="1.800" />
            <g stroke="#9aa7b0" strokeDasharray="1 3" fill="none">
                <path d="M1104 102q13 2 16 11M1104 131q12-2 16-11" strokeWidth="4" />
            </g>
        </g>
        <path d="M1104 92l4-5 2 5-3 3z" fill="#8f83bb" stroke="#b9b3da" strokeWidth=".6" />
        <path d="M1132 124l4-2 6 4-5 3h-4z" fill="#8f83bb" stroke="#b9b3da" strokeWidth=".6" />
        <path d="M1091 143l4-2 3 5-4 3z" fill="#8f83bb" stroke="#b9b3da" strokeWidth=".6" />

        <g fill="#eef6fa" fontSize="11">
            <text x="1143" y="558">z</text>
            <text x="1153" y="572">y</text>
            <text x="1136" y="580">k</text>
            <path d="M1140 572l4-4 9 3M1144 568v-12" fill="none" stroke="#eef6fa" />
        </g>
    </Scene>
)

const WheelArt = () => (
    <svg viewBox="0 0 99 99" width="99" height="99" aria-hidden="true">
        <defs>
            <linearGradient id="dial" x2="1" y2="1">
                <stop offset="0" stopColor="#5f7488" />
                <stop offset=".45" stopColor="#142f44" />
                <stop offset="1" stopColor="#061a26" />
            </linearGradient>
            <radialGradient id="hub" cx=".4" cy=".35">
                <stop offset="0" stopColor="#6b6668" />
                <stop offset="1" stopColor="#0b0b0d" />
            </radialGradient>
        </defs>
        <circle cx="50" cy="50" r="48" fill="url(#dial)" stroke="#b5d3e8" strokeWidth="2" />
        <path d="M16 16l68 68M84 16L16 84" stroke="#9fb6c9" strokeWidth="1.500" />
        <circle cx="50" cy="50" r="17.500" fill="url(#hub)" stroke="#6a8196" strokeWidth="2" />
        <path d="M42 42l18 8-18 8z" fill="#fffaf0" stroke="#d8b98c" strokeWidth=".6" />
        <g fill="#f0b02e" stroke="#a9690c" strokeWidth=".6">
            <circle cx="42" cy="12" r="3" /><circle cx="57" cy="11" r="3" />
            <path d="M38 16q4-2 8 0v8h-7zM53 15q4-2 8 0l-1 8h-7z" />
            <circle cx="50" cy="10" r="3.500" fill="#ffd765" />
            <path d="M45 16q5-3 10 0l-1 9h-8z" fill="#ffcb4a" />
        </g>
        <path d="M75 50h14M81 41v17M81 41h8M81 58h8" stroke="#c0222a" strokeWidth="1.500" fill="none" />
        <g fill="#f15b60"><circle cx="75" cy="50" r="2.500" /><circle cx="89" cy="50" r="2.800" /><circle cx="89" cy="41" r="2.800" /><circle cx="89" cy="58" r="2.800" /></g>
        <path d="M42 76h8v11h6M50 79h6" stroke="#8a6a54" fill="none" />
        <g fill="#cfc8c2"><circle cx="42" cy="76" r="2.500" /><circle cx="56" cy="79" r="2.500" /><circle cx="56" cy="87" r="2.500" /></g>
        <ellipse cx="17" cy="51" rx="10" ry="4.500" fill="#c8c6ee" />
        <path d="M17 40Q9 42 8 51q9 4 18 0-1-9-9-11z" fill="#8d8ccb" />
        <path d="M17 40v9l-8 4M17 49l8 4" stroke="#dcdaf8" fill="none" />
    </svg>
)

const SpecTree = () => (
    <Tree>
        <li>
            <TreeRow $root>
                <Glyph $size={20}>
                    <path d="M1 6h18v9l-3 4-2-3-3 4-3-4-2 3-3-2-2-3z" fill="#3f6f98" />
                    <path d="M3 9v8M7 10v8M12 11v8M17 9v8" stroke="#a9c6dc" strokeWidth="1.500" />
                    <path d="M1 6l2-3 3 0 2-2h4l2 2 3 0 2 3-2 3-3 0-2 2H8l-2-2-3 0z" fill="#f1f7fb" />
                    <ellipse cx="10" cy="6" rx="3.500" ry="2" fill="#1a5078" />
                </Glyph>
                <TreeLabel>Representation3</TreeLabel>
            </TreeRow>
            <Branch $indent={2} $tail={127}>
                {['xy plane', 'yz plane', 'zx plane'].map(name => (
                    <li key={name}>
                        <TreeRow>
                            <Joint />
                            <Glyph>{planeIcon}</Glyph>
                            <TreeLabel $active={name === 'yz plane'}>{name}</TreeLabel>
                        </TreeRow>
                    </li>
                ))}
                <li>
                    <TreeRow>
                        <Joint><Expander type="button" aria-label="Collapse PartBody"><svg viewBox="0 0 8 8"><path d="M0 4h8" /></svg></Expander></Joint>
                        <Glyph>
                            <circle cx="12" cy="10" r="7" fill="#0d2f1b" stroke="#0d2f1b" strokeWidth="2" strokeDasharray="3 2" />
                            <circle cx="9" cy="10" r="6" fill="#79cf86" />
                            <circle cx="9" cy="10" r="7.500" fill="none" stroke="#79cf86" strokeWidth="3" strokeDasharray="3 2.900" />
                            <circle cx="9" cy="10" r="2.500" fill="#175a30" />
                        </Glyph>
                        <TreeLabel>PartBody</TreeLabel>
                    </TreeRow>
                    <Branch $indent={17} $tail={12}>
                        {features.map(f => (
                            <li key={f.name}>
                                <TreeRow>
                                    <Joint><Expander type="button" aria-label={`Expand ${f.name}`}><svg viewBox="0 0 8 8"><path d="M0 4h8M4 0v8" /></svg></Expander></Joint>
                                    <Glyph>{f.icon}</Glyph>
                                    <TreeLabel $active={f.active} $current={f.current}>{f.name}</TreeLabel>
                                </TreeRow>
                            </li>
                        ))}
                    </Branch>
                </li>
            </Branch>
        </li>
    </Tree>
)

const Limit = ({ index, value }) => (
    <>
        <LimitTitle>Limit {index}</LimitTitle>
        <Field $label={53}>
            <label htmlFor={`type${index}`}>Type:</label>
            <Picker>
                <select id={`type${index}`}><option>Dimension</option></select>
                <DownArrow />
            </Picker>
        </Field>
        <Field $label={53}>
            <label htmlFor={`dim${index}`}>Dimension:</label>
            <Spinner>
                <input id={`dim${index}`} defaultValue={value} />
                <Steps>
                    <button type="button" aria-label="Increase"><UpArrow /></button>
                    <button type="button" aria-label="Decrease"><DownArrow /></button>
                </Steps>
            </Spinner>
        </Field>
    </>
)

const ExtrudeDialog = () => (
    <Window role="dialog" aria-label="Extruded Surface Definition" $left={916} $top={255} $width={228}
        $glass="linear-gradient(100deg, #9db0bf, #6e8ba2 30%, #4a6f8f 60%, #5f84a2)">
        <TitleBar>
            <h2>Extruded Surface Definition</h2>
            <Caption>
                <CaptionButton type="button">?</CaptionButton>
                <CaptionButton type="button" $wide aria-label="Close"><Cross /></CaptionButton>
            </Caption>
        </TitleBar>
        <Panel $pad="7px 7px 7px 7px">
            <Field $label={47} $inset={21} $tall>
                <label htmlFor="profile">Profile:</label>
                <TextBox id="profile" $picked defaultValue="Sketch.2" />
            </Field>
            <Field $label={47} $inset={21} $tall>
                <label htmlFor="direction">Direction:</label>
                <TextBox id="direction" defaultValue="yz plane" />
            </Field>
            <Limits>
                <legend>Extrusion Limits</legend>
                <Limit index={1} value="50mm" />
                <Limit index={2} value="0mm" />
            </Limits>
            <PushButton type="button">Reverse Direction</PushButton>
            <Actions>
                <PushButton type="button" $soft $mark="#17c22c">OK</PushButton>
                <PushButton type="button" $mark="#dc1f2c">Cancel</PushButton>
                <PushButton type="button" $soft>Preview</PushButton>
            </Actions>
            <Marker $left={9} $top={5} $width={190} $height={53} />
            <Marker $left={4} $top={68} $width={206} $height={59} />
            <Marker $left={27} $top={212} $width={31} $height={21} />
        </Panel>
    </Window>
)

const CaptureDialog = () => {
    const [source, setSource] = useState('screen')
    return (
        <Window role="dialog" aria-label="Capture" $left={-1} $top={431} $width={200}
            $glass="linear-gradient(100deg, #b9bcbf, #85898f 35%, #5c6a76 55%, #9a9da1)">
            <TitleBar>
                <h2>Capture</h2>
                <Caption>
                    <CaptionButton type="button">?</CaptionButton>
                    <CaptionButton type="button" $wide $danger aria-label="Close"><Cross /></CaptionButton>
                </Caption>
            </TitleBar>
            <Panel $pad="8px 8px 9px">
                <CaptureGroups>
                    <CaptureSet>
                        <legend>Type</legend>
                        <RadioLabel>
                            <input type="radio" name="source" checked={source === 'window'} onChange={() => setSource('window')} />
                            V6 window
                        </RadioLabel>
                        <RadioLabel>
                            <input type="radio" name="source" checked={source === 'screen'} onChange={() => setSource('screen')} />
                            Screen capture
                        </RadioLabel>
                    </CaptureSet>
                    <CaptureSet>
                        <legend>Control</legend>
                        <RecordButtons>
                            <RecordButton type="button" aria-label="Record" $focus>
                                <Glyph><circle cx="10" cy="10" r="4.500" fill="#a30f12" /></Glyph>
                            </RecordButton>
                            <RecordButton type="button" aria-label="Options">
                                <Glyph $size={22}>
                                    <path d="M3 5h12v11H3z" fill="#fff" stroke="#2c4480" />
                                    <path d="M5 9h4M5 12h4M11 9h3" stroke="#2c4480" strokeWidth="1.500" />
                                    <path d="M7 5q4-4 9-2v4l-7 0z" fill="#e9b48e" stroke="#6b4330" strokeWidth=".6" />
                                    <path d="M16 1h4v5h-4z" fill="#16181f" />
                                </Glyph>
                            </RecordButton>
                            <RecordButton type="button" aria-label="Close recorder">
                                <Glyph>
                                    <path d="M2 10l5 8h9V4z" fill="#f0e6a4" stroke="#555" />
                                    <path d="M3 3q5-3 8 0l1 5-4 3-5-3z" fill="#8a5a4c" stroke="#4d2a20" />
                                    <path d="M15 3l-3 7-3-2 4 10 5-3-2-4z" fill="#c81f1c" />
                                    <path d="M4 13l6 5" stroke="#222" strokeWidth="1.500" />
                                </Glyph>
                            </RecordButton>
                        </RecordButtons>
                    </CaptureSet>
                </CaptureGroups>
            </Panel>
        </Window>
    )
}

const BusyRing = styled.span`
    position: absolute;
    left: 129px;
    top: 494px;
    width: 17px;
    height: 17px;
    border: 4px solid;
    border-color: #8fe0da #2f9aa4 #45b9ba #b5efe9;
    border-radius: 50%;
    opacity: .9;
`

const segmentIcons = [
    <g key="search"><path d="M14 12L3 19" stroke="#b9471a" strokeWidth="3.500" /><path d="M13 12l-8 5" stroke="#ffc08a" /><circle cx="18" cy="8" r="7" fill="#f08a4a" stroke="#b9471a" /><path d="M15 4q4-2 6 2l-3 6" stroke="#fff" fill="none" strokeWidth="2" /></g>,
    <g key="info"><ellipse cx="15" cy="14" rx="14" ry="5" fill="#e2ddd8" stroke="#8d8680" /><circle cx="17" cy="8" r="7.500" fill="#9b938c" stroke="#5d5650" /><path d="M17 7l-2 7M18 3v2" stroke="#fff" strokeWidth="2.500" /></g>,
    <g key="chat"><path d="M7 14Q30-4 30 3 28 14 7 19" fill="none" stroke="#e3575b" strokeWidth="2" /><circle cx="18" cy="9" r="8" fill="#e3262c" /><path d="M14 11q-2-6 5-6 5 2 2 6" stroke="#ffc7c5" strokeWidth="2" fill="none" /><circle cx="5" cy="15" r="3.500" fill="#d71f26" stroke="#fff" strokeWidth=".6" /></g>,
    <g key="propagate"><path d="M18 5q7-6 14 0v12q-7 5-14 0z" fill="#4550d8" stroke="#20277c" /><ellipse cx="25" cy="6" rx="7" ry="5" fill="#8f9cf2" /><path d="M19 13q6 4 12 0" stroke="#aeb8ff" fill="none" strokeWidth="2" /><path d="M23 9l1-5q4-1 3 1.500-1 1.500-3 1" stroke="#f0f2ff" fill="none" /></g>,
]

const segments = ['Ready to search', 'Ready for selection', 'Ready to chat', 'Ready for propagate']

const App = () => (
    <Page>
        <GlobalStyle />
        <MenuBar>
            <MenuList>
                <Glyph $size={16}>
                    <circle cx="11" cy="8" r="9" fill="#f3f2fb" stroke="#8a86b5" />
                    <path d="M12 3Q6 2 5 7q0 5 7 5" fill="none" stroke="#2d2a72" strokeWidth="2" />
                    <path d="M12 6q4 1 2 7M9 8l5 0" stroke="#c45a28" strokeWidth="2" fill="none" />
                </Glyph>
                {menus.map(name => <MenuItem key={name} type="button">{name}</MenuItem>)}
            </MenuList>
            <WindowButtons>
                <WindowButton type="button" aria-label="Minimize"><svg width="9" height="9"><path d="M2 7h5" stroke="currentColor" strokeWidth="2" /></svg></WindowButton>
                <WindowButton type="button" aria-label="Restore"><svg width="9" height="9"><path d="M3 3V1h5v4H6M1 4h5v4H1z" fill="none" stroke="currentColor" /></svg></WindowButton>
                <WindowButton type="button" aria-label="Close"><svg width="9" height="9"><path d="M2 2l5 5M7 2L2 7" stroke="currentColor" strokeWidth="2" /></svg></WindowButton>
            </WindowButtons>
        </MenuBar>
        <ToolBar role="toolbar">
            {topGroups.map(group => (
                <ToolGroup key={group.tools[0]} $grow={group.grow}>
                    {group.tools.map(id => <Tool key={id} id={id} />)}
                </ToolGroup>
            ))}
            <MoreTools type="button" aria-label="More tools">»</MoreTools>
        </ToolBar>
        <Workspace>
            <Viewport>
                <ModelScene />
                <SpecTree />
                <Note $left={534} $top={46} $width={304} $thick>
                    <p>STEP 4</p>
                    <p>Extrude the Sketch with specified</p>
                    <p>value as shown here</p>
                </Note>
                <Note $left={584} $top={136} $width={311}>
                    <p>Search Tool: Insert &gt; Surface &gt; Extrude</p>
                </Note>
                <ProfileTag type="button">
                    <svg viewBox="0 0 24 24" aria-hidden="true">
                        <circle cx="12" cy="12" r="11" fill="#06202c" stroke="#a4b6c0" />
                        <path d="M6 16q0-5 3-4t4 4q4 2 4-3t-3-6-4 1" fill="none" stroke="#d6e0e6" strokeWidth="1.300" />
                    </svg>
                    <span>Profile »</span>
                </ProfileTag>
                <Wheel type="button" aria-label="Compass menu"><WheelArt /></Wheel>
                <ExtrudeDialog />
                <CaptureDialog />
                <BusyRing />
            </Viewport>
            <SideBar role="toolbar">
                {sideGroups.map(group => (
                    <SideGroup key={group.tools[0]} $grow={group.grow} $full={group.full}>
                        {group.tools.map(id => <Tool key={id} id={id} />)}
                    </SideGroup>
                ))}
            </SideBar>
        </Workspace>
        <StatusBar>
            <Version>
                <Glyph $size={20}>
                    <circle cx="9" cy="13" r="6.500" fill="#7f87c0" stroke="#c2c8ea" />
                    <path d="M6 8l5-7 5 2-4 5z" fill="#6a72ae" stroke="#b3b9e2" strokeWidth=".7" />
                    <circle cx="9" cy="13" r="2" fill="#d9dcf4" />
                </Glyph>
                V6
            </Version>
            <Pill>
                <PillHead>
                    <svg width="26" height="20" viewBox="0 0 26 20" aria-hidden="true">
                        <circle cx="13" cy="10" r="11" fill="#93c83c" />
                        <circle cx="10" cy="6" r="5" fill="#d9ee8a" opacity=".7" />
                        <path d="M10 3q7-1 5 3l-3 4" fill="none" stroke="#d2532a" strokeWidth="1.800" />
                        <path d="M9 11l-2 7q6-1 7-5-1-3-5-2z" fill="none" stroke="#2d5a24" strokeWidth="1.500" />
                    </svg>
                </PillHead>
                {segments.map((name, i) => (
                    <Segment key={name} $grow={i === 3 ? 206 : 218}>
                        <StatusPicker>
                            <select aria-label={name}><option>{name}</option></select>
                            <Chevron />
                        </StatusPicker>
                        <SegmentEnd><svg viewBox="0 0 32 20" aria-hidden="true">{segmentIcons[i]}</svg></SegmentEnd>
                    </Segment>
                ))}
            </Pill>
            <Brand viewBox="0 0 32 22" aria-label="CATIA">
                <path d="M9 1q7 0 5 3l-4 3" fill="none" stroke="#d0342c" strokeWidth="2" />
                <path d="M6 7l-3 8q7 0 8-5-1-3-5-2" fill="none" stroke="#fff" strokeWidth="1.800" />
                <path d="M19 5q-7 0-5 3t-5 5" fill="none" stroke="#e06a2a" strokeWidth="2" />
                <text x="6" y="21" fontSize="7" fontWeight="bold" fontStyle="italic" fill="#fff">CATIA</text>
            </Brand>
        </StatusBar>
        <TaskBar>
            <TaskSet>
                <Task type="button" aria-label="Start" $width={48} $gap={5}><svg viewBox="0 0 32 13"><circle cx="16" cy="17" r="15" fill="#8a9297" stroke="#d4dadd" /><path d="M9 11q3-3 7-1v5H9z" fill="#e5562a" /><path d="M17 10q4 2 7 0v5h-7z" fill="#8cc63f" /></svg></Task>
                <Task type="button" aria-label="Recorder" $width={50} $gap={4} $open><svg viewBox="0 0 32 13"><circle cx="16" cy="16" r="13" fill="#6b2a82" stroke="#fff" strokeWidth="2" /><circle cx="16" cy="16" r="6" fill="none" stroke="#fff" strokeWidth="2" /></svg></Task>
                <Task type="button" aria-label="Browser" $width={50} $gap={4}><svg viewBox="0 0 32 13"><circle cx="16" cy="16" r="12" fill="#3b8ed0" /><path d="M4 14Q4 6 10 4l3 4q-4 1-3 5z" fill="#e8762b" /></svg></Task>
                <Task type="button" aria-label="Library" $width={50} $gap={7}><svg viewBox="0 0 32 13"><path d="M4 8l18-3 6 8H6z" fill="#8d1f1c" stroke="#4a0d0c" /></svg></Task>
                <Task type="button" aria-label="Explorer" $width={50} $gap={3} $open><svg viewBox="0 0 32 13"><path d="M3 6h10l2 2h14v6H3z" fill="#f3d670" stroke="#a9842a" /><path d="M6 4h6v4H6zM18 5h7v4h-7z" fill="#fdf4bd" /></svg></Task>
                <Task type="button" aria-label="Photos" $width={50} $gap={6} $open><svg viewBox="0 0 32 13"><path d="M5 7h22v7H5z" fill="#6fb0dc" stroke="#d7ecf8" /><circle cx="12" cy="12" r="3" fill="#e58a2c" /></svg></Task>
                <Task type="button" aria-label="CATIA" $width={50} $open><svg viewBox="0 0 32 13"><circle cx="16" cy="16" r="12" fill="#eceaf6" stroke="#6d68a0" /><path d="M19 9q-7-1-8 5" stroke="#2d2a72" strokeWidth="2.500" fill="none" /><path d="M17 11q4 0 4 3" stroke="#c45a28" strokeWidth="2" fill="none" /></svg></Task>
            </TaskSet>
            <Tray>
                <svg viewBox="0 0 246 13" aria-hidden="true">
                    <path d="M2 11h12l-5 2zM44 11h13v2H44z" fill="#cfcac6" />
                    <circle cx="93" cy="15" r="6" fill="#b6a3cc" /><path d="M130 11h12v2h-12z" fill="#d3222a" /><circle cx="156" cy="15" r="6" fill="#e8a83a" />
                </svg>
                <time>3:30</time>
            </Tray>
            <Badge viewBox="0 0 45 20" aria-hidden="true">
                <path d="M0 0h45v20H0z" fill="#f9ee10" />
                <path d="M4 20q4-4 10-3h8l-3 3z" fill="#20242a" />
                <path d="M22 20q4-4 9-3h9l-4 3z" fill="#3d9a2e" />
            </Badge>
        </TaskBar>
    </Page>
)

export default App
